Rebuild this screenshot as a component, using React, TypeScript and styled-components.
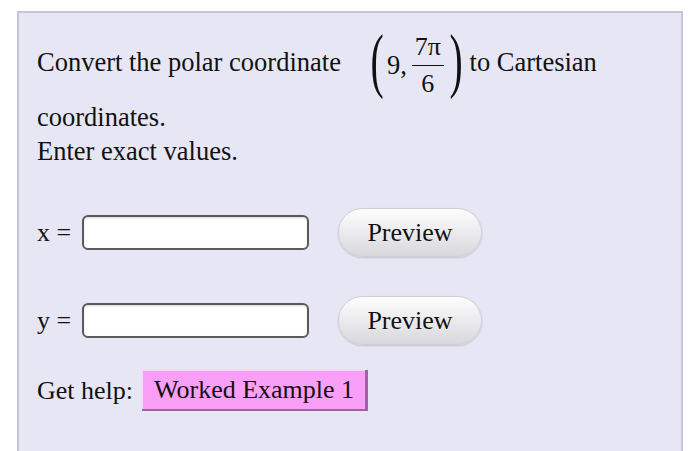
import React from "react";
import styled, { createGlobalStyle } from "styled-components";

const GlobalStyle = createGlobalStyle`
  html, body {
    margin: 0;
    padding: 0;
    background: #ffffff;
    overflow: hidden;
  }
  body {
    font-family: "Liberation Serif", "Times New Roman", serif;
    color: #111;
  }
`;

const Page = styled.div`
  width: 700px;
  height: 451px;
  padding: 11px 17px 0 17px;
  box-sizing: border-box;
`;

const Panel = styled.div`
  height: 460px;
  box-sizing: border-box;
  background: #e7e6f4;
  border: 2px solid #c6c4dc;
  border-bottom: none;
  padding: 17px 18px 0 18px;
`;

const Question = styled.p`
  margin: 0;
  font-size: 26.5px;
  line-height: 34px;
`;

const MathGroup = styled.span`
  display: inline-flex;
  align-items: center;
  vertical-align: middle;
  margin: 0 -5px 0 24px;
  height: 70px;
`;

const Paren = styled.span`
  display: inline-block;
  font-size: 72px;
  line-height: 70px;
  transform: scaleX(0.55) translateY(-5px);
`;

const Nine = styled.span`
  margin-left: -2px;
`;

const Fraction = styled.span`
  display: inline-flex;
  flex-direction: column;
  align-items: center;
  margin: 0 0 0 5px;
  font-size: 26px;
  line-height: 26px;
`;

const Numerator = styled.span`
  padding: 0 3px 5px;
  border-bottom: 1.5px solid #111;
`;

const Denominator = styled.span`
  padding-top: 5px;
`;

const AnswerRow = styled.div<{ $top: number }>`
  display: flex;
  align-items: center;
  margin-top: ${(p) => p.$top}px;
  font-size: 26px;
`;

const Label = styled.span`
  width: 45px;
`;

const AnswerInput = styled.input`
  width: 227px;
  height: 35px;
  box-sizing: border-box;
  border: 2px solid #5a5a5a;
  border-radius: 6px;
  background: #fff;
  box-shadow: inset 0 1px 2px rgba(0, 0, 0, 0.15);
`;

const PreviewButton = styled.button`
  margin-left: 29px;
  width: 144px;
  height: 49px;
  border-radius: 25px;
  border: 1px solid #cfcfd6;
  background: linear-gradient(#fdfdfd, #e9e9ec 55%, #d8d8dc);
  box-shadow: 0 1px 2px rgba(0, 0, 0, 0.15);
  font-family: "Liberation Serif", "Times New Roman", serif;
  font-size: 26px;
  color: #111;
  padding: 0;
`;

const HelpRow = styled.div`
  display: flex;
  align-items: center;
  margin-top: 25px;
  font-size: 26px;
`;

const HelpButton = styled.button`
  margin-left: 9px;
  height: 41px;
  padding: 0 11px 0 12px;
  background: #f99ff8;
  border: none;
  border-right: 3px solid #a062a0;
  border-bottom: 2px solid #a062a0;
  box-shadow: inset 1px 1px 0 #fcd0fb;
  font-family: "Liberation Serif", "Times New Roman", serif;
  font-size: 26px;
  color: #111;
`;

const App: React.FC = () => {
  return (
    <>
      <GlobalStyle />
      <Page>
        <Panel>
          <Question>
            Convert the polar coordinate
            <MathGroup>
              <Paren>(</Paren>
              <Nine>9,</Nine>
              <Fraction>
                <Numerator>7π</Numerator>
                <Denominator>6</Denominator>
              </Fraction>
              <Paren>)</Paren>
            </MathGroup>
            {" "}to Cartesian coordinates.
            <br />
            Enter exact values.
          </Question>
          <AnswerRow $top={40}>
            <Label>x =</Label>
            <AnswerInput type="text" />
            <PreviewButton type="button">Preview</PreviewButton>
          </AnswerRow>
          <AnswerRow $top={39}>
            <Label>y =</Label>
            <AnswerInput type="text" />
            <PreviewButton type="button">Preview</PreviewButton>
          </AnswerRow>
          <HelpRow>
            <span>Get help:</span>
            <HelpButton type="button">Worked Example 1</HelpButton>
          </HelpRow>
        </Panel>
      </Page>
    </>
  );
};

export default App;
